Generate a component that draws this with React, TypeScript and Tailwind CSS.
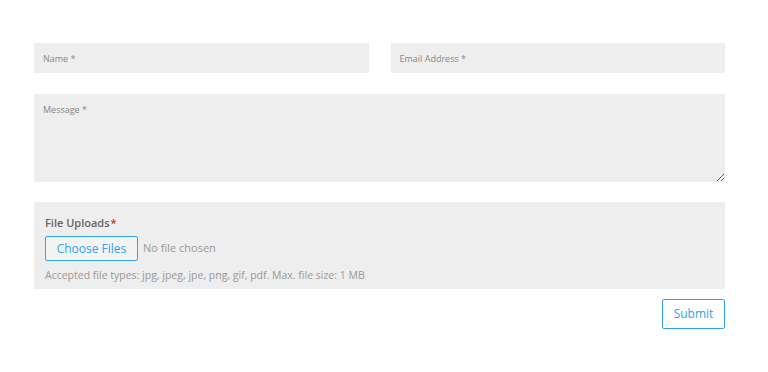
export default function App() {
  return (
    <div className="w-[768px] h-[372px] bg-white" style={{ fontFamily: '"Open Sans", sans-serif' }}>
      <form className="ml-[34px] w-[691px] pt-[43px] flex flex-col">
        <div className="flex gap-[22px]">
          <input
            placeholder="Name *"
            className="flex-1 h-[30px] bg-[#eeeeee] px-[9px] text-[9px] text-[#888] placeholder:text-[#888] outline-none"
          />
          <input
            placeholder="Email Address *"
            className="flex-1 h-[30px] bg-[#eeeeee] px-[9px] text-[9px] text-[#888] placeholder:text-[#888] outline-none"
          />
        </div>
        <textarea
          placeholder="Message *"
          className="mt-[21px] h-[88px] bg-[#eeeeee] px-[9px] pt-[9px] text-[9px] text-[#888] placeholder:text-[#888] outline-none resize-y"
        />
        <div className="mt-[20px] h-[87px] bg-[#eeeeee] pl-[11px] pt-[13px]">
          <div className="text-[11px] font-semibold text-[#666] leading-[15px]">
            File Uploads<span className="ml-[1px] text-[#e02b20]">*</span>
          </div>
          <div className="mt-[6px] flex items-center">
            <button
              type="button"
              className="h-[25px] w-[93px] border-[1.5px] border-[#2ea3f2] rounded-[2px] bg-[#f4f4f4] text-[12px] text-[#2ea3f2] leading-none"
            >
              Choose Files
            </button>
            <span className="ml-[5px] text-[11px] text-[#999]">No file chosen</span>
          </div>
          <div className="mt-[7px] text-[10.5px] text-[#999] leading-[15px]">
            Accepted file types: jpg, jpeg, jpe, png, gif, pdf. Max. file size: 1 MB
          </div>
        </div>
        <div className="mt-[10px] flex justify-end">
          <button
            type="button"
            className="h-[30px] w-[63px] border-[1.5px] border-[#2ea3f2] rounded-[2px] text-[12px] text-[#2ea3f2]"
          >
            Submit
          </button>
        </div>
      </form>
    </div>
  );
}
